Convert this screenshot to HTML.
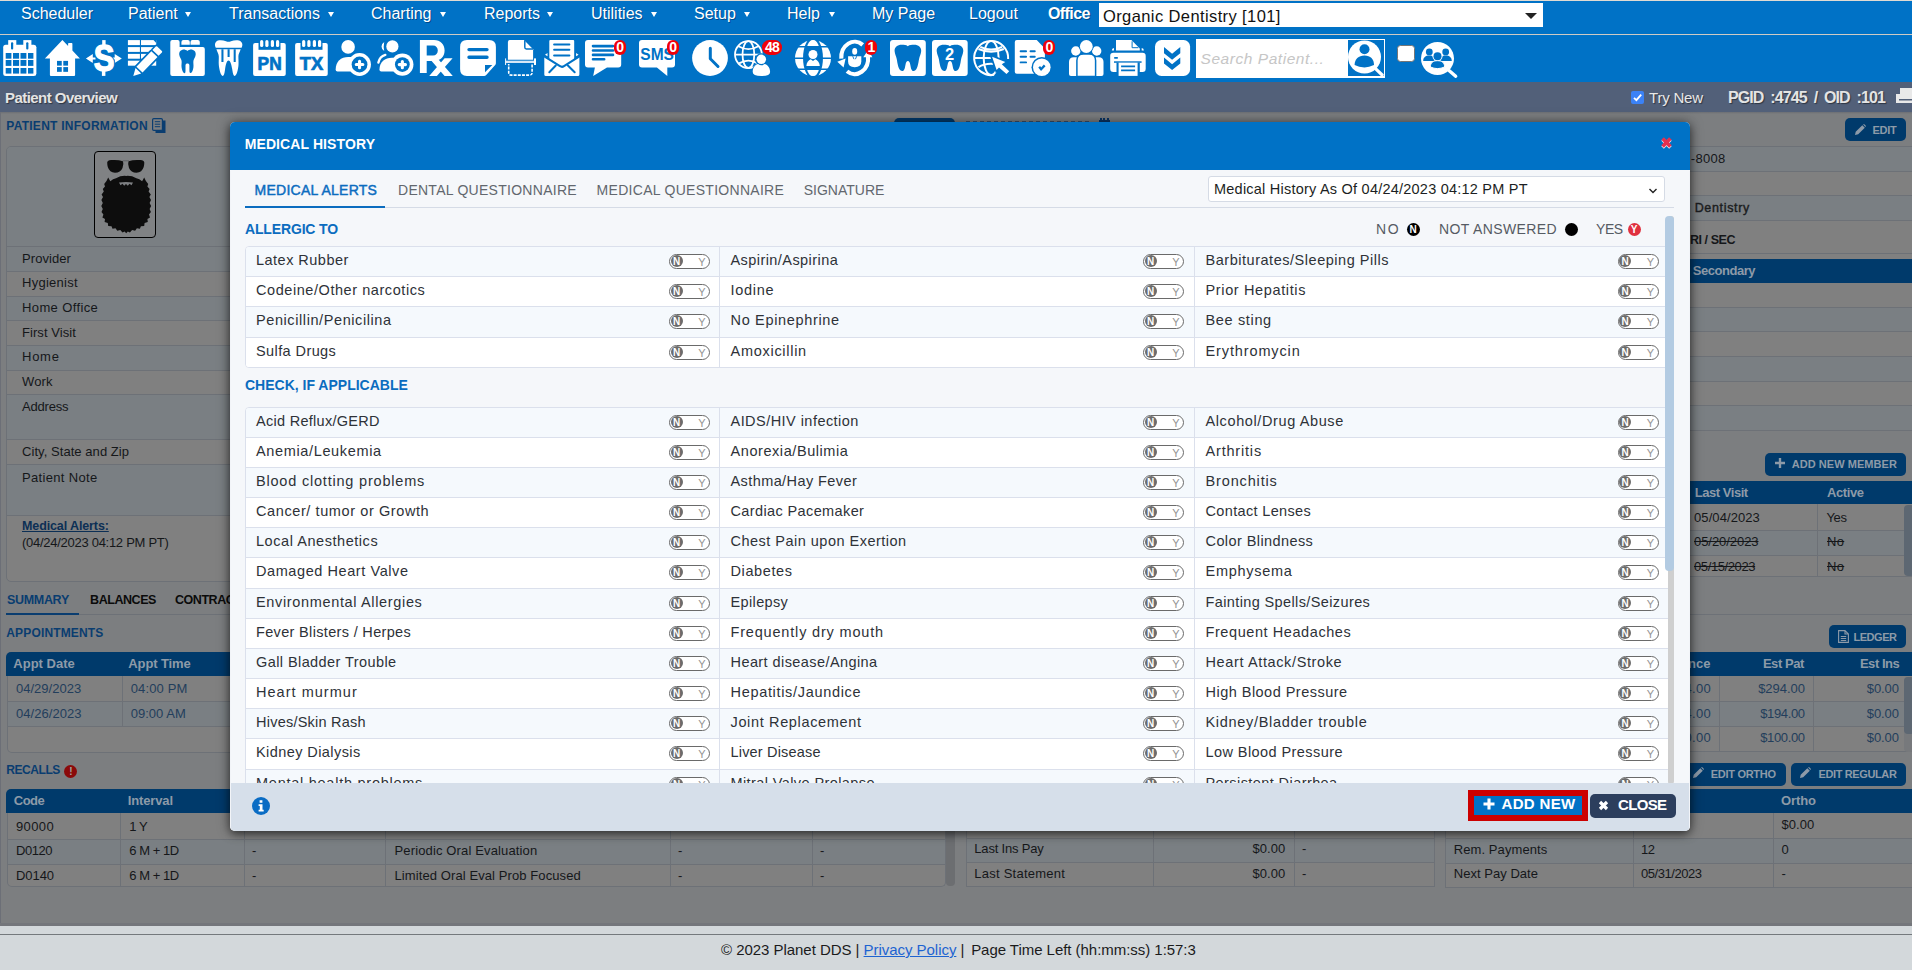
<!DOCTYPE html>
<html>
<head>
<meta charset="utf-8">
<title>Patient Overview</title>
<style>
*{box-sizing:border-box;margin:0;padding:0}
html,body{width:1912px;height:970px;overflow:hidden;background:#7c7e80;font-family:"Liberation Sans",sans-serif;}
#nav{position:absolute;left:0;top:0;width:1912px;height:34px;background:#0072c6;border-top:1px solid #e0dbd3}
#nav span{position:absolute;top:3px;color:#fff;font-size:16px;line-height:20px;white-space:nowrap;text-shadow:1px 1px 0 rgba(0,40,90,.55)}
#nav i{position:absolute;top:11px;width:0;height:0;border-left:3px solid transparent;border-right:3px solid transparent;border-top:5px solid #fff}
#navline{position:absolute;left:0;top:34px;width:1912px;height:1px;background:#cfcbc4}
#tool{position:absolute;left:0;top:35px;width:1912px;height:47px;background:#0072c6}
#tool svg{position:absolute;overflow:visible}
.badge{position:absolute;background:#f00008;color:#fff;font-weight:bold;font-size:14px;line-height:15px;height:14.700px;border-radius:7.300px;text-align:center;letter-spacing:-0.6px}
#title{position:absolute;left:0;top:82px;width:1912px;height:30px;background:#526079}
#title span{position:absolute;color:#e4e4e4;white-space:nowrap;text-shadow:1px 1px 1px rgba(0,0,0,.45)}
#bg{position:absolute;left:0;top:0;width:1912px;height:926px;overflow:hidden;clip-path:inset(112px 0 0 0)}
#bg div,#bg span{position:absolute}
.t{font-size:13px;color:#15171a;white-space:nowrap;letter-spacing:.35px;line-height:16px}
.hd{background:#003a6b}
.ht{font-size:13px;font-weight:bold;color:#8d9aa8;white-space:nowrap;line-height:16px;letter-spacing:0px}
.sec{font-size:12px;font-weight:bold;color:#0a3d70;white-space:nowrap;line-height:16px;letter-spacing:.1px}
.ln{background:#6f7379;height:1px}
.vl{background:#6f7379;width:1px}
.ra{background:#7a7f83}
.rb{background:#808080}
.btn{background:#003a6b;border-radius:5px;color:#8d9aa8;font-weight:bold;font-size:12px;line-height:23px;white-space:nowrap;letter-spacing:-.2px}
#foot{position:absolute;left:0;top:926px;width:1912px;height:44px;background:#d3d8db}
#foot .l{position:absolute;left:0;top:8px;width:1912px;height:1px;background:#74797d}
#foot span{position:absolute;top:15px;font-size:15px;line-height:18px;color:#1b1b1b;white-space:nowrap}
#modal{position:absolute;left:230px;top:122px;width:1460px;height:709px;border-radius:5px;background:#f5f7fa;box-shadow:0 3px 9px rgba(0,0,0,.5),0 0 14px rgba(0,0,0,.35);overflow:hidden}
#mh{position:absolute;left:0;top:0;width:1460px;height:48px;background:#0072c6}
#mh span{position:absolute;left:14.700px;top:14px;color:#fff;font-weight:bold;font-size:14px;line-height:16px;letter-spacing:-.1px}
#mf{position:absolute;left:0;top:661px;width:1460px;height:48px;background:#d6dfea}
#mf div,#mf span{position:absolute}
#mb{position:absolute;left:0;top:48px;width:1460px;height:613px;overflow:hidden}
#mb div,#mb span{position:absolute}
.tab{font-size:14px;line-height:16px;color:#62676e;white-space:nowrap;letter-spacing:.1px}
.lab{font-size:14.5px;line-height:18px;color:#2e3238;white-space:nowrap;letter-spacing:.25px}
.tg{width:41px;height:15px;border:1.5px solid #6a6a6a;border-radius:8px;background:#fff}
.tg b{position:absolute;left:.5px;top:0px;width:12px;height:12px;border-radius:6px;background:#6c6c6c;color:#fff;font-size:10px;line-height:14px;text-align:center;font-weight:bold}
.tg u{position:absolute;right:3.4px;top:1px;font-size:11px;line-height:12px;color:#939393;text-decoration:none}
</style>
</head>
<body>

<div id="nav"><span style="left:21px">Scheduler</span><span style="left:128px">Patient</span><i style="left:185px"></i><span style="left:229px">Transactions</span><i style="left:328px"></i><span style="left:371px">Charting</span><i style="left:440px"></i><span style="left:484px">Reports</span><i style="left:547px"></i><span style="left:591px">Utilities</span><i style="left:651px"></i><span style="left:694px">Setup</span><i style="left:744px"></i><span style="left:787px">Help</span><i style="left:829px"></i><span style="left:872px">My Page</span><span style="left:969px">Logout</span><span style="left:1048px;font-weight:bold;letter-spacing:-.6px">Office</span><div style="position:absolute;left:1099px;top:2px;width:444px;height:24px;background:#fff"><span style="left:4px;top:3px;color:#111;font-size:16.500px;text-shadow:none;letter-spacing:0.393px">Organic Dentistry [101]</span><i style="left:426px;top:10px;border-top:6px solid #222;border-left-width:6px;border-right-width:6px"></i></div></div><div id="navline"></div>
<div id="tool"><svg style="left:2.7px;top:5px" width="34" height="36.2" viewBox="0 0 34 36.2"><rect x=".2" y="4.800" width="33.200" height="31.300" rx="2.500" fill="#fff"/><rect x="5.2" y=".1" width="8.100" height="6" fill="#fff"/><rect x="8" y="2.300" width="2.200" height="7.300" rx="1" fill="#0072c6"/><rect x="20.3" y=".1" width="8.100" height="6" fill="#fff"/><rect x="23.2" y="2.300" width="2.200" height="7.300" rx="1" fill="#0072c6"/><rect x="2.7" y="13" width="5.7" height="5.7" fill="#0072c6"/><rect x="2.7" y="20" width="5.7" height="5.9" fill="#0072c6"/><rect x="2.7" y="28" width="5.7" height="5.6" fill="#0072c6"/><rect x="10" y="13" width="6.1" height="5.7" fill="#0072c6"/><rect x="10" y="20" width="6.1" height="5.9" fill="#0072c6"/><rect x="10" y="28" width="6.1" height="5.6" fill="#0072c6"/><rect x="17.5" y="13" width="5.9" height="5.7" fill="#0072c6"/><rect x="17.5" y="20" width="5.9" height="5.9" fill="#0072c6"/><rect x="17.5" y="28" width="5.9" height="5.6" fill="#0072c6"/><rect x="25" y="13" width="5.4" height="5.7" fill="#0072c6"/><rect x="25" y="20" width="5.4" height="5.9" fill="#0072c6"/><rect x="25" y="28" width="5.4" height="5.6" fill="#0072c6"/></svg><svg style="left:45px;top:5px" width="35" height="36.2" viewBox="0 0 35 36.2"><path d="M17.400,-.1 L23.100,5.900 V3.800 Q23.100,3 23.900,3 H26.600 Q27.400,3 27.400,3.800 V10.500 L34.900,18.400 H30.100 V35.100 Q30.100,36.100 29.100,36.100 H5.900 Q4.900,36.100 4.900,35.100 V18.400 H-.1 Z" fill="#fff"/><rect x="12" y="20.9" width="4.750" height="4.750" fill="#0072c6"/><rect x="12" y="27.1" width="4.750" height="4.750" fill="#0072c6"/><rect x="18.3" y="20.9" width="4.750" height="4.750" fill="#0072c6"/><rect x="18.3" y="27.1" width="4.750" height="4.750" fill="#0072c6"/></svg><svg style="left:86.2px;top:5px" width="36" height="36" viewBox="0 0 36 36"><path d="M-.1,18.500 L6.800,14.100 V17.400 H9.500 V19.500 H6.800 V22.900 Z M35.800,18.500 L28.700,14.100 V17.400 H26 V19.500 H28.700 V22.900 Z" fill="#fff"/><text transform="translate(18.100,0) scale(.84,1)" x="0" y="31.400" font-family="Liberation Sans" font-weight="bold" font-size="37" text-anchor="middle" fill="#0072c6" stroke="#0072c6" stroke-width="3.600">S</text><text transform="translate(18.100,0) scale(.84,1)" x="0" y="31.400" font-family="Liberation Sans" font-weight="bold" font-size="37" text-anchor="middle" fill="#fff" stroke="#fff" stroke-width="1.400">S</text><rect x="16.200" y=".1" width="3.400" height="5" fill="#fff"/><rect x="15.900" y="31" width="3.500" height="4.900" fill="#fff"/></svg><svg style="left:128px;top:5px" width="36" height="36.2" viewBox="0 0 36 36.2"><rect x="-.1" y="0.1" width="12" height="5" fill="#fff"/><rect x="13" y="0.1" width="15.200" height="5" fill="#fff"/><rect x="-.1" y="7.1" width="12" height="4.8" fill="#fff"/><rect x="13" y="7.1" width="15.200" height="4.8" fill="#fff"/><rect x="-.1" y="13.9" width="12" height="4.8" fill="#fff"/><rect x="13" y="13.9" width="15.200" height="4.8" fill="#fff"/><rect x="-.1" y="20.7" width="12" height="5" fill="#fff"/><rect x="13" y="20.7" width="15.200" height="5" fill="#fff"/><path d="M28.200,.1 V3 L25.500,.1 Z" fill="#0072c6" transform="translate(0,0) scale(1,1)"/><g transform="translate(5.300,36.100) rotate(-46.200)"><path d="M0,0 L7.300,-3.900 V3.900 Z M8.900,-4.250 H30.500 V4.250 H8.900 Z M32.100,-4.250 H36.900 Q37.900,-4.250 37.900,-3.250 V3.250 Q37.900,4.250 36.900,4.250 H32.100 Z" fill="#0072c6" stroke="#0072c6" stroke-width="3.2" stroke-linejoin="round"/><path d="M0,0 L7.300,-3.900 V3.900 Z M8.900,-4.250 H30.500 V4.250 H8.900 Z M32.100,-4.250 H36.900 Q37.900,-4.250 37.900,-3.250 V3.250 Q37.900,4.250 36.900,4.250 H32.100 Z" fill="#fff" stroke="#fff" stroke-width="0" stroke-linejoin="round"/></g></svg><svg style="left:170.2px;top:5px" width="35" height="36.2" viewBox="0 0 35 36.2"><path d="M11.400,4.800 V2.100 Q11.400,.1 13.400,.1 H17.800 Q19.800,.1 19.800,2.100 V4.800 Z M20.500,4.800 V2.100 Q20.500,.1 22.500,.1 H27.800 Q29.800,.1 29.800,2.100 V4.800 Z" fill="#fff"/><path d="M.3,2.100 Q.3,.1 2.300,.1 H7.600 Q9.600,.1 9.600,2.100 V7.100 H32.800 Q34.800,7.100 34.800,9.100 V34.100 Q34.800,36.100 32.800,36.100 H2.300 Q.3,36.100 .3,34.100 Z" fill="#fff"/><path d="M17.400,10.900 C16.200,10 14.200,9.300 12.500,9.700 C10,10.300 9,12.500 9.200,14.500 C9.500,17 11,18.500 11.500,20.500 C12,22.500 11.200,25 11.600,27.500 C12,30.500 13,32.800 14.300,33.200 C15.300,33.400 15.500,32 15.500,30.500 L15.500,25.500 C15.500,24 16.500,23.600 17.400,23.600 C18.400,23.600 19.400,24 19.400,25.500 L19.400,30.500 C19.400,32 19.700,33.300 20.700,33 C22,32.600 23,30.500 23.400,27.500 C23.800,25 23,22.500 23.500,20.500 C24,18.500 25.500,17 25.700,14.500 C25.900,12.500 24.900,10.300 22.400,9.700 C20.700,9.300 18.600,10 17.400,10.900 Z" fill="#0072c6"/></svg><svg style="left:215.4px;top:5px" width="27.6" height="36" viewBox="0 0 27.6 36"><path d="M.8,7.800 C-.5,5.500 -.5,2 3,.6 C5.500,-.3 8.500,.3 11,1.300 C12.800,2 14.200,2 16,1.300 C18.500,.3 21.500,-.3 24,.6 C27.900,2 27.900,5.500 26.600,7.800 Z" fill="#fff"/><path d="M1.400,9.150 H25.700 C24.500,12.500 23.400,14 23.400,16.500 C23.400,19 23.700,22 23.500,25 C23.200,29.500 21.500,35.900 19.800,35.900 C18.100,35.900 17.700,32 17.200,29 C16.600,25.500 15.500,20.500 13.500,20.500 C11.600,20.500 10.600,25.500 10.100,29 C9.700,32 9.300,35.900 7.600,35.900 C5.900,35.900 4.200,29.500 3.800,25 C3.600,22 3.900,19 3.800,16.500 C3.700,14 2.600,12.500 1.400,9.150 Z" fill="#fff"/><path d="M7.450,9.150V21.900M19.700,9.150V21.900M13.600,9.150V17.100" stroke="#0072c6" stroke-width="2.050"/></svg><svg style="left:253.3px;top:5px" width="33" height="36.2" viewBox="0 0 33 36.2"><path d="M2.100,3 H30.750 Q32.750,3 32.750,5 V34.100 Q32.750,36.100 30.750,36.100 H2.100 Q.1,36.100 .1,34.100 V5 Q.1,3 2.100,3 Z" fill="#fff"/><rect x="5.500" y="0" width="22" height="9.800" fill="#0072c6"/><rect x="7.1" y=".1" width="3.200" height="7" rx="1.600" fill="#fff"/><rect x="12.3" y=".1" width="3.200" height="7" rx="1.600" fill="#fff"/><rect x="17.8" y=".1" width="3.200" height="7" rx="1.600" fill="#fff"/><rect x="23" y=".1" width="3.200" height="7" rx="1.600" fill="#fff"/><text x="4.6" y="29.800" font-family="Liberation Sans" font-weight="bold" font-size="18.400" textLength="24.1" lengthAdjust="spacingAndGlyphs" fill="#0072c6" stroke="#0072c6" stroke-width=".7">PN</text></svg><svg style="left:295.3px;top:5px" width="33" height="36.2" viewBox="0 0 33 36.2"><path d="M2.100,3 H30.750 Q32.750,3 32.750,5 V34.100 Q32.750,36.100 30.750,36.100 H2.100 Q.1,36.100 .1,34.100 V5 Q.1,3 2.100,3 Z" fill="#fff"/><rect x="5.500" y="0" width="22" height="9.800" fill="#0072c6"/><rect x="7.1" y=".1" width="3.200" height="7" rx="1.600" fill="#fff"/><rect x="12.3" y=".1" width="3.200" height="7" rx="1.600" fill="#fff"/><rect x="17.8" y=".1" width="3.200" height="7" rx="1.600" fill="#fff"/><rect x="23" y=".1" width="3.200" height="7" rx="1.600" fill="#fff"/><text x="4.8" y="29.800" font-family="Liberation Sans" font-weight="bold" font-size="18.400" textLength="23.5" lengthAdjust="spacingAndGlyphs" fill="#0072c6" stroke="#0072c6" stroke-width=".7">TX</text></svg><svg style="left:336.2px;top:5px" width="36" height="37" viewBox="0 0 36 37"><circle cx="12.100" cy="6.900" r="6.800" fill="#fff"/><path d="M-.35,29.800 C-.35,21.500 5,17.100 12.300,17.100 H20 V31.600 H1.450 Q-.35,31.600 -.35,29.800 Z" fill="#fff"/><circle cx="23.55" cy="24.5" r="11.4" fill="#fff"/><circle cx="23.55" cy="24.5" r="7.9" fill="#0072c6"/><path d="M20.25,24.5h6.6M23.55,21.2v6.6" stroke="#fff" stroke-width="3.100" stroke-linecap="round"/></svg><svg style="left:376.9px;top:5px" width="37" height="37" viewBox="0 0 37 37"><path d="M7.200,1.900 A5.200,5.200 0 0 0 7.200,11 A22,22 0 0 1 7.200,1.900 Z" fill="#fff"/><path d="M1.400,22.600 C2.300,18.500 5,15.800 8.300,14.900" fill="none" stroke="#fff" stroke-width="2.400" stroke-linecap="round"/><circle cx="15.400" cy="6.400" r="6.100" fill="#fff"/><path d="M2.450,29.800 C2.450,22 8,17.800 15,17.800 H22 V31.600 H4.250 Q2.450,31.600 2.450,29.800 Z" fill="#fff"/><circle cx="25.35" cy="24.6" r="11.1" fill="#fff"/><circle cx="25.35" cy="24.6" r="7.4" fill="#0072c6"/><path d="M22.25,24.6h6.2M25.35,21.5v6.2" stroke="#fff" stroke-width="3.100" stroke-linecap="round"/></svg><svg style="left:420.4px;top:5px" width="34" height="36.2" viewBox="0 0 34 36.2"><path d="M-.1,.1 H14 C20.500,.1 24.600,4.400 24.600,10.500 C24.600,16.500 20.500,20.900 14,20.900 H6.700 V33 H-.1 Z M6.700,5.500 V15.500 H13 C16,15.500 17.800,13.500 17.800,10.500 C17.800,7.500 16,5.500 13,5.500 Z" fill="#fff" fill-rule="evenodd"/><path d="M11.200,20.500 L18.300,19.200 L32.800,36.100 H24.600 Z M24.600,18.200 H32.600 L16.900,36.100 H9.200 Z" fill="#fff"/></svg><svg style="left:460px;top:5px" width="36" height="36.2" viewBox="0 0 36 36.2"><path d="M6.900,.1 H29.100 Q35.900,.1 35.900,6.900 V23.300 Q35.900,24.300 35.200,25 L26,35.300 Q25.200,36.100 24.200,36.100 H6.900 Q.1,36.100 .1,29.300 V6.900 Q.1,.1 6.900,.1 Z" fill="#fff"/><path d="M25,25 H32.300 L25,32.300 Z" fill="#0072c6"/><path d="M9,9.600H27M9,17.300H27" stroke="#0072c6" stroke-width="3.400" stroke-linecap="round"/></svg><svg style="left:505px;top:5px" width="31" height="36.2" viewBox="0 0 31 36.2"><path d="M4.900,.1 H19 L28.100,9.150 V19.800 H2.900 V2.100 Q2.900,.1 4.900,.1 Z" fill="#fff"/><path d="M19.800,.3 V7.300 Q19.800,8.900 21.400,8.900 H28.100" fill="none" stroke="#0072c6" stroke-width="1.500"/><rect x=".7" y="20.700" width="29.200" height="2.300" fill="#d7e7f6"/><rect x="0" y="18.400" width="1.100" height="6.600" fill="#e6f0fa"/><rect x="29" y="18.400" width="2" height="6.600" fill="#fff"/><path d="M3.700,23.900 V32.600 Q3.700,35.100 6.200,35.100 H24.600 Q27.100,35.100 27.100,32.600 V23.900" fill="none" stroke="#fff" stroke-width="1.600" stroke-dasharray="3 1.150" stroke-dashoffset="1.500"/></svg><svg style="left:543.8px;top:5px" width="35.7" height="36.2" viewBox="0 0 35.7 36.2"><path d="M1,14.800 L3.500,13 V16.200 Z M34.600,14.800 L32.100,13 V16.200 Z" fill="#fff"/><path d="M6.300,.1 H29.200 Q30.200,.1 30.200,1.100 V28 H5.300 V1.100 Q5.300,.1 6.300,.1 Z" fill="#fff"/><path d="M10.100,4.400H25.400M10.100,9.800H25.400M10.100,15.500H25.400" stroke="#0072c6" stroke-width="2" stroke-linecap="round"/><path d="M.3,17.300 L.3,16 L16,26.300 Q18,27.600 20,26.300 L35.400,16 V34.600 Q35.400,36.100 33.900,36.100 H1.800 Q.3,36.100 .3,34.600 Z" fill="#fff"/><path d="M-.5,15.800 L16,26.200 Q18,27.500 20,26.200 L36.200,15.800" fill="none" stroke="#0072c6" stroke-width="2.100"/><path d="M-1,15 L.3,17.500 V14 Z M36.700,15 L35.400,17.500 V14 Z" fill="#0072c6"/><path d="M11.800,25.500 L5.300,32.300 M23.900,25.500 L30.700,32.300" stroke="#0072c6" stroke-width="2" stroke-linecap="round"/></svg><svg style="left:585px;top:5px" width="36.2" height="36" viewBox="0 0 36.2 36"><path d="M3,0 H33.200 Q36.200,0 36.200,3 V24.500 Q36.200,27.500 33.200,27.500 H22 L8.200,35.900 L9.900,27.500 H3 Q0,27.500 0,24.500 V3 Q0,0 3,0 Z" fill="#fff"/><path d="M8,6.100H28M8,10.500H28M8,14.900H28M8,19.300H19.200" stroke="#0072c6" stroke-width="2.600" stroke-linecap="round"/></svg><div class="badge" style="left:614px;top:5.100px;width:11.6px">0</div><svg style="left:639px;top:5px" width="36" height="36" viewBox="0 0 36 36"><path d="M3,0 H33 Q36,0 36,3 V24.500 Q36,27.500 33,27.500 H28.300 V35.900 L17.900,27.500 H3 Q0,27.500 0,24.500 V3 Q0,0 3,0 Z" fill="#fff"/><text x="1.300" y="20.300" font-family="Liberation Sans" font-weight="bold" font-size="15.800" textLength="33.600" lengthAdjust="spacingAndGlyphs" fill="#0072c6">SMS</text></svg><div class="badge" style="left:667px;top:5.100px;width:11.9px">0</div><svg style="left:691.8px;top:4.9px" width="36" height="36" viewBox="0 0 36 36"><circle cx="18" cy="18" r="17.900" fill="#fff"/><path d="M18.300,8.300 V18.800 L26,26.500" fill="none" stroke="#0072c6" stroke-width="3" stroke-linecap="round" stroke-linejoin="round"/></svg><svg style="left:734px;top:5px" width="37" height="37" viewBox="0 0 37 37"><g fill="none" stroke="#fff" stroke-width="1.800"><circle cx="14.400" cy="14.600" r="13.400"/><ellipse cx="14.400" cy="14.600" rx="5.900" ry="13.400"/><path d="M1,14.600H27.800M4.300,6.300 Q14.400,12 24.500,6.300M5,23.400 Q14.400,18 23.800,23.400"/></g><circle cx="27.300" cy="19.350" r="6.200" fill="#0072c6"/><circle cx="27.300" cy="19.350" r="4.750" fill="#fff"/><path d="M18.700,32 C18.700,27 21.500,24.700 24,24 Q27.300,26.600 30.600,24 C33.100,24.700 36.100,27 36.100,32 Q36.100,36.100 27.400,36.100 Q18.700,36.100 18.700,32 Z" fill="#fff" stroke="#0072c6" stroke-width="1.500" paint-order="stroke"/></svg><div class="badge" style="left:762.3px;top:5.100px;width:19.6px">48</div><svg style="left:795px;top:4.9px" width="36" height="36.2" viewBox="0 0 36 36.2"><circle cx="18" cy="18.100" r="18" fill="#fff"/><clipPath id="gp"><rect x="0" y="6.800" width="36" height="22.500"/></clipPath><ellipse cx="18" cy="18.100" rx="8.900" ry="19.500" fill="#0072c6" clip-path="url(#gp)"/><g fill="none" stroke="#0072c6"><path d="M0,6.800H36M0,18.200H36M0,29.300H36" stroke-width="1.400"/><ellipse cx="18" cy="18.100" rx="8.900" ry="19.500" stroke-width="2.100"/></g><circle cx="18" cy="14.500" r="4.500" fill="#fff"/><path d="M11.400,26 C11.400,22.500 13.500,20.500 15.700,19.200 L18,21.100 L20.300,19.200 C22.500,20.500 24.800,22.500 24.800,26 Z" fill="#fff"/></svg><svg style="left:836.8px;top:4.9px" width="37" height="37" viewBox="0 0 37 37"><path d="M25.700,4.900 A13.400,16 0 0 0 4.300,18.700" fill="none" stroke="#fff" stroke-width="4.100"/><path d="M.3,21.800 L8.600,18.600 L6.600,27.400 Z" fill="#fff"/><path d="M10,31.200 A13.400,16 0 0 0 30.970,15.900" fill="none" stroke="#fff" stroke-width="4.100"/><path d="M26.300,17.200 L35.300,17.200 L31.500,9.500 Z" fill="#fff"/><ellipse cx="17.700" cy="11.400" rx="2.500" ry="3.300" fill="#fff"/><path d="M11.100,16.200 H24.300 V21.500 Q24.300,27.200 17.700,27.200 Q11.100,27.200 11.100,21.500 Z" fill="#fff"/><path d="M15.700,16.200 L17,19.200 M19.700,16.200 L18.400,19.200" stroke="#0072c6" stroke-width=".9" fill="none"/></svg><div class="badge" style="left:865.3px;top:5.100px;width:11.8px">1</div><svg style="left:890.1px;top:5px" width="35.8" height="36" viewBox="0 0 35.8 36"><rect x="0" y="0" width="35.800" height="36" rx="3" fill="#fff"/><path d="M 17.77,6.13 C 16.04,4.70 14.18,4.70 11.78,4.70 C 7.26,4.70 4.33,7.34 4.60,11.04 C 4.87,14.20 6.20,16.32 6.73,18.96 C 7.53,22.65 8.06,30.57 12.05,31.10 C 14.44,31.36 14.97,27.40 15.51,24.76 C 16.04,22.12 16.57,20.94 17.90,20.94 C 19.23,20.94 19.76,22.12 20.29,24.76 C 20.83,27.40 21.36,31.36 23.75,31.10 C 27.74,30.57 28.27,22.65 29.07,18.96 C 29.60,16.32 30.93,14.20 31.20,11.04 C 31.47,7.34 28.54,4.70 24.02,4.70 C 21.62,4.70 19.76,4.70 17.77,6.13 Z" fill="#0072c6"/></svg><svg style="left:932.2px;top:5px" width="35.7" height="36" viewBox="0 0 35.7 36"><rect x="0" y="0" width="35.700" height="36" rx="3" fill="#fff"/><path d="M 17.87,6.13 C 16.14,4.70 14.28,4.70 11.88,4.70 C 7.36,4.70 4.43,7.34 4.70,11.04 C 4.97,14.20 6.30,16.32 6.83,18.96 C 7.63,22.65 8.16,30.57 12.15,31.10 C 14.54,31.36 15.07,27.40 15.61,24.76 C 16.14,22.12 16.67,20.94 18.00,20.94 C 19.33,20.94 19.86,22.12 20.39,24.76 C 20.93,27.40 21.46,31.36 23.85,31.10 C 27.84,30.57 28.37,22.65 29.17,18.96 C 29.70,16.32 31.03,14.20 31.30,11.04 C 31.57,7.34 28.64,4.70 24.12,4.70 C 21.72,4.70 19.86,4.70 17.87,6.13 Z" fill="#0072c6"/><text x="17.700" y="19.600" font-family="Liberation Sans" font-weight="bold" font-size="16.500" text-anchor="middle" fill="#fff">2</text></svg><svg style="left:972.8px;top:4.9px" width="37" height="37" viewBox="0 0 37 37"><g fill="none" stroke="#fff" stroke-width="2"><path d="M21.10,34.84 A17,17 0 1 1 35.13,18.99"/><ellipse cx="18.150" cy="18.100" rx="7.500" ry="17"/><path d="M1.200,18.100H20M5.500,9 Q18.150,14.500 30.800,9M7.300,6.800 Q18.150,12.300 29,6.800M5.500,27.200 Q12,22.800 22,24"/></g><path d="M19.100,16.800 L32.300,21.900 L28.800,24.300 L36.200,31.300 L33.500,33.900 L26,27.600 L23.600,30.100 Z" fill="#0072c6" stroke="#0072c6" stroke-width="3.400" stroke-linejoin="miter"/><path d="M19.100,16.800 L32.300,21.900 L28.800,24.300 L36.200,31.300 L33.500,33.900 L26,27.600 L23.600,30.100 Z" fill="#fff"/></svg><svg style="left:1015.2px;top:5px" width="37.5" height="37.8" viewBox="0 0 37.5 37.8"><path d="M1.800,0 H21.700 L29.900,8.500 V31.700 Q29.900,33.700 27.900,33.700 H1.800 Q-.2,33.700 -.2,31.700 V2 Q-.2,0 1.800,0 Z" fill="#fff"/><path d="M5.600,11.300H11.100M15.500,11.300H19.800M5.600,16.700H11.100M15.500,16.700H19.800M5.600,22.400H11.100" stroke="#0072c6" stroke-width="1.900" stroke-linecap="round"/><circle cx="26.800" cy="27.300" r="10.300" fill="#0072c6"/><circle cx="26.800" cy="27.300" r="8.800" fill="#fff"/><path d="M24.200,26.800 L26.100,29.200 L29.700,25.400" fill="none" stroke="#0072c6" stroke-width="2.300"/></svg><div class="badge" style="left:1043.2px;top:5.100px;width:11.7px">0</div><svg style="left:1069.1px;top:5px" width="34.5" height="36" viewBox="0 0 34.5 36"><circle cx="6.800" cy="11" r="4.700" fill="#fff"/><circle cx="27.700" cy="11" r="4.700" fill="#fff"/><path d="M0,34 V22 Q0,17.200 4.800,17.200 H29.700 Q34.500,17.200 34.500,22 V34 Q34.500,36 32.500,36 H2 Q0,36 0,34 Z" fill="#fff"/><path d="M7.900,36.600 V20.400 Q7.900,13.900 14.400,13.900 H20.100 Q26.600,13.900 26.600,20.400 V36.600 Z" fill="#fff" stroke="#0072c6" stroke-width="1.500"/><circle cx="17.300" cy="6.500" r="7.300" fill="#0072c6"/><circle cx="17.300" cy="6.500" r="6.400" fill="#fff"/></svg><svg style="left:1110px;top:5px" width="35.9" height="36" viewBox="0 0 35.9 36"><path d="M6,0 H21.400 L29.800,8.400 V10.600 H6 Z" fill="#fff"/><path d="M22.100,1.300V7.700H28.400" fill="none" stroke="#0072c6" stroke-width="1"/><path d="M1.800,10.600 Q1.800,8.200 4,8 V10.600 Z M33.900,10.600 Q33.900,8.200 31.700,8 V10.600 Z" fill="#fff"/><rect x=".2" y="12.800" width="35.500" height="19.100" rx="3.200" fill="#fff"/><rect x="4" y="17.100" width="4" height="1.600" rx=".8" fill="#0072c6"/><rect x="4" y="21.300" width="27.600" height="1.500" fill="#0072c6"/><rect x="6.500" y="22.700" width="23.300" height="9.300" fill="#0072c6"/><rect x="8.600" y="22.700" width="19" height="13.200" fill="#fff"/><path d="M11.100,26.400H25.100M11.100,30.400H25.100" stroke="#0072c6" stroke-width="1.800"/></svg><svg style="left:1154.9px;top:5px" width="35.1" height="36" viewBox="0 0 35.1 36"><rect x="0" y="0" width="35.100" height="36" rx="6.500" fill="#fff"/><path d="M9,7.100 L17.100,13.700 L25.300,7.100 V13.200 L17.100,19.800 L9,13.200 Z M9,17.600 L17.100,24.200 L25.300,17.600 V23.600 L17.100,30 L9,23.600 Z" fill="#0072c6"/></svg><div style="position:absolute;left:1196px;top:4px;width:189px;height:39px;background:#fff"></div><span style="position:absolute;left:1200.500px;top:13.500px;font-size:15.500px;line-height:20px;font-style:italic;color:#c6c6c6;white-space:nowrap;letter-spacing:.55px">Search Patient...</span><div style="position:absolute;left:1348px;top:5px;width:36px;height:36px;background:#0072c6"></div><svg style="left:1348.1px;top:5px" width="36" height="36" viewBox="0 0 36 36"><circle cx="16.500" cy="17" r="16.500" fill="#fff"/><path d="M28,29.100 L34.200,35" stroke="#fff" stroke-width="3.200" stroke-linecap="round"/><circle cx="16.500" cy="9.300" r="5" fill="#0072c6"/><path d="M6.600,25 C6.600,19 10.500,15.400 16.500,15.400 C22.500,15.400 26,19 26,25 Q21,27.400 16.500,27.400 Q11,27.400 6.600,25 Z" fill="#0072c6"/></svg><div style="position:absolute;left:1397px;top:9.600px;width:17.500px;height:17.500px;background:#fff;border:1.500px solid #767676;border-radius:3.500px"></div><svg style="left:1421.1px;top:7.2px" width="36" height="36" viewBox="0 0 36 36"><circle cx="16.500" cy="16.500" r="16.500" fill="#fff"/><path d="M28.300,28.800 L34.700,34.200" stroke="#fff" stroke-width="3.400" stroke-linecap="round"/><circle cx="8.300" cy="9.900" r="3.400" fill="#0072c6"/><circle cx="24.700" cy="9.900" r="3.400" fill="#0072c6"/><path d="M2.200,19 C2.200,15.500 4.500,13.600 8.300,13.600 C12,13.600 13.500,15.500 13.500,19 Z M19.500,19 C19.500,15.500 21,13.600 24.700,13.600 C28.500,13.600 30.800,15.500 30.800,19 Z" fill="#0072c6"/><circle cx="16.500" cy="14.300" r="5" fill="#fff"/><circle cx="16.500" cy="14.300" r="4" fill="#0072c6"/><path d="M9.400,25 C9.400,20.500 12,18.700 16.500,18.700 C21,18.700 23.600,20.500 23.600,25 Q20,26.600 16.500,26.600 Q13,26.600 9.400,25 Z" fill="#0072c6" stroke="#fff" stroke-width="1"/></svg></div>
<div id="title"><span style="left:5px;top:7px;font-size:15px;font-weight:bold;line-height:18px;letter-spacing:-.55px">Patient Overview</span><div style="position:absolute;left:1631px;top:9px;width:13px;height:13px;background:#3b82f6;border-radius:2px"><svg width="13" height="13" viewBox="0 0 13 13" style="position:absolute;left:0;top:0"><path d="M3 6.8 L5.4 9.2 L10.2 3.6" fill="none" stroke="#fff" stroke-width="1.8"/></svg></div><span style="left:1649px;top:7px;font-size:15px;line-height:18px;letter-spacing:-.2px;color:#e8e8e8">Try New</span><span style="left:1728px;top:6px;font-size:16px;font-weight:bold;line-height:20px;letter-spacing:-.9px;word-spacing:3.300px">PGID :4745 / OID :101</span><svg style="position:absolute;left:1896px;top:4.500px" width="16" height="20" viewBox="0 0 16 18"><path d="M4 0h12v7H4z M0 6h16v9H0z" fill="#e9e9e9"/><path d="M3 11h13v1.5H3z" fill="#526079"/></svg></div>
<div id="bg"><div style="left:0px;top:112px;width:1912px;height:814px;background:#7c7e80;"></div><div style="left:0px;top:112px;width:1912px;height:2px;background:linear-gradient(rgba(60,65,80,.25),rgba(60,65,80,0));"></div><div style="left:0px;top:112px;width:1.3px;height:814px;background:#6c6f77;"></div><div style="left:0px;top:922.5px;width:1912px;height:3.5px;background:#74767b;"></div><span class="sec" style="left:6.3px;top:118px;font-size:12px;letter-spacing:0.256px">PATIENT INFORMATION</span><svg style="position:absolute;left:152px;top:118px" width="14" height="15" viewBox="0 0 14 15"><path d="M3.5 2.500h10v12.500h-10z" fill="#0a3d70"/><rect x=".6" y=".6" width="9.800" height="11.800" rx="1.200" fill="#7c7e80" stroke="#0a3d70" stroke-width="1.200"/><path d="M2.800 3.700h5.400M2.800 6.200h5.400M2.800 8.700h5.400" stroke="#0a3d70" stroke-width="1"/></svg><div style="left:5.5px;top:146px;width:941px;height:435.5px;background:#808080;border:1px solid #6d7177;border-radius:5px;overflow:hidden;"></div><div style="left:6.5px;top:146.5px;width:930px;height:99.5px;background:#7a7f83;border-radius:4px 0 0 0;"></div><div style="left:6.5px;top:246.8px;width:930px;height:24.2px;background:#7a7f83;"></div><div style="left:6.5px;top:246.2px;width:930px;height:1px;background:#6d7177;"></div><span class="t" style="left:22px;top:251px;;letter-spacing:0.075px">Provider</span><div style="left:6.5px;top:271.5px;width:930px;height:24.5px;background:#808080;"></div><div style="left:6.5px;top:270.9px;width:930px;height:1px;background:#6d7177;"></div><span class="t" style="left:22px;top:275px;;letter-spacing:0.268px">Hygienist</span><div style="left:6.5px;top:296.2px;width:930px;height:24.3px;background:#7a7f83;"></div><div style="left:6.5px;top:295.6px;width:930px;height:1px;background:#6d7177;"></div><span class="t" style="left:22px;top:300px;;letter-spacing:0.382px">Home Office</span><div style="left:6.5px;top:320.8px;width:930px;height:24.2px;background:#808080;"></div><div style="left:6.5px;top:320.2px;width:930px;height:1px;background:#6d7177;"></div><span class="t" style="left:22px;top:325px;;letter-spacing:0.071px">First Visit</span><div style="left:6.5px;top:345.5px;width:930px;height:24.5px;background:#7a7f83;"></div><div style="left:6.5px;top:344.9px;width:930px;height:1px;background:#6d7177;"></div><span class="t" style="left:22px;top:349px;;letter-spacing:0.751px">Home</span><div style="left:6.5px;top:370.5px;width:930px;height:24px;background:#808080;"></div><div style="left:6.5px;top:369.9px;width:930px;height:1px;background:#6d7177;"></div><span class="t" style="left:22px;top:374px;;letter-spacing:0.135px">Work</span><div style="left:6.5px;top:394.8px;width:930px;height:44.2px;background:#7a7f83;"></div><div style="left:6.5px;top:394.2px;width:930px;height:1px;background:#6d7177;"></div><span class="t" style="left:22px;top:399px;;letter-spacing:-0.198px">Address</span><div style="left:6.5px;top:439.5px;width:930px;height:24.5px;background:#808080;"></div><div style="left:6.5px;top:438.9px;width:930px;height:1px;background:#6d7177;"></div><span class="t" style="left:22px;top:444px;;letter-spacing:0.059px">City, State and Zip</span><div style="left:6.5px;top:464.5px;width:930px;height:51px;background:#7a7f83;"></div><div style="left:6.5px;top:463.9px;width:930px;height:1px;background:#6d7177;"></div><span class="t" style="left:22px;top:470px;;letter-spacing:0.335px">Patient Note</span><div style="left:6.5px;top:515.4px;width:930px;height:1px;background:#6d7177;"></div><div style="left:94px;top:151px;width:62px;height:87px;background:#808284;border:1px solid #000;border-radius:4px;"></div><svg style="position:absolute;left:101px;top:158px" width="51" height="77" viewBox="0 0 51 77"><path d="M6.200,4.500 Q6.500,2.300 10,2.100 Q17,1.500 22,3.200 Q23,6 21.500,10 Q19.500,14.800 14,14.800 Q8.500,14.500 6.800,9 Q6.200,6.500 6.200,4.500 Z" fill="#0d0d0d"/><path d="M43.300,4.500 Q43,2.300 39.500,2.100 Q32.500,1.500 27.500,3.200 Q26.500,6 28,10 Q30,14.800 35.500,14.800 Q41,14.500 42.700,9 Q43.300,6.500 43.300,4.500 Z" fill="#0d0d0d"/><path d="M21.500,2.800 H28" stroke="#55585c" stroke-width=".8"/><path d="M7.2,19.500 L9.300,23.300 Q12,20.600 15,20.300 Q20,17.400 25.200,17.900 Q30.400,17.400 35.400,20.300 Q38.400,20.600 41.100,23.300 L43.200,19.500 L44.9,23 L47.2,26 L46.4,28.5 L48.6,31 L47.6,33.5 L49.8,36.5 L48.4,39 L50,42 L48.6,45 L50.1,48 L48.6,51 L49.9,54 L48,56.5 L49,59.5 L46.4,61 L46.8,64 L43.6,65 L43.2,68 L39.9,68.2 L38.9,70.8 L35.9,70.3 L34.1,72.8 L31.1,72 L28.9,74.4 L26.8,73.4 L25.2,75.2 L23.6,73.4 L21.5,74.4 L19.3,72 L16.3,72.8 L14.5,70.3 L11.5,70.8 L10.5,68.2 L7.2,68 L6.8,65 L3.6,64 L4,61 L1.4,59.5 L2.4,56.5 L0.5,54 L1.8,51 L0.3,48 L1.8,45 L0.4,42 L2,39 L0.6,36.5 L2.8,33.5 L1.8,31 L4,28.5 L3.2,26 L5.5,23 Z" fill="#0d0d0d"/><path d="M18,24.600 Q25,23.400 32,24.600 L30.500,27.300 L28.500,25.800 L26.800,27.800 L25,26 L23.200,27.800 L21.500,25.800 L19.500,27.300 Z" fill="#7d7f82"/></svg><span class="t" style="left:22px;top:518px;font-weight:bold;color:#0c2f55;text-decoration:underline;font-size:12.5px;letter-spacing:-0.111px">Medical Alerts:</span><span class="t" style="left:22px;top:535px;;letter-spacing:-0.277px">(04/24/2023 04:12 PM PT)</span><span class="t" style="left:6.9px;top:592px;color:#0a3d70;font-weight:bold;font-size:12.5px;letter-spacing:-0.297px">SUMMARY</span><span class="t" style="left:90.1px;top:592px;color:#0b0b0b;font-weight:bold;font-size:12.5px;letter-spacing:-0.45px">BALANCES</span><span class="t" style="left:175px;top:592px;color:#0b0b0b;font-weight:bold;font-size:12.5px;letter-spacing:-0.45px">CONTRACTS</span><div style="left:6px;top:614px;width:1906px;height:1px;background:#6d7177;"></div><div style="left:6px;top:613.3px;width:73px;height:1.7px;background:#0a3d70;"></div><span class="sec" style="left:6.3px;top:625px;;letter-spacing:0.151px">APPOINTMENTS</span><div style="left:6px;top:652px;width:940px;height:24px;background:#003a6b;border-radius:5px 5px 0 0;"></div><span class="ht" style="left:13.3px;top:655.5px;;letter-spacing:0.005px">Appt Date</span><span class="ht" style="left:128.3px;top:655.5px;;letter-spacing:-0.123px">Appt Time</span><div style="left:7px;top:676px;width:939px;height:76.5px;background:#808080;border:1px solid #6d7177;border-top:none;border-radius:0 0 5px 5px;"></div><div style="left:8px;top:676px;width:937px;height:25px;background:#808080;"></div><div style="left:8px;top:701.5px;width:937px;height:25px;background:#7a7f83;"></div><div style="left:8px;top:701px;width:937px;height:1px;background:#6d7177;"></div><div style="left:8px;top:726px;width:937px;height:1px;background:#6d7177;"></div><div style="left:122px;top:676px;width:1px;height:50px;background:#6d7177;"></div><span class="t" style="left:16px;top:680.5px;color:#233e5c;letter-spacing:0.007px">04/29/2023</span><span class="t" style="left:130.7px;top:680.5px;color:#233e5c;letter-spacing:0.141px">04:00 PM</span><span class="t" style="left:16px;top:705.5px;color:#233e5c;letter-spacing:0.041px">04/26/2023</span><span class="t" style="left:130.7px;top:705.5px;color:#233e5c;letter-spacing:0.027px">09:00 AM</span><span class="sec" style="left:6.3px;top:762px;;letter-spacing:-0.45px">RECALLS</span><div style="left:64.300px;top:764.500px;width:13px;height:13px;border-radius:7px;background:#8b0a0a;color:#a3a3a3;font-size:10px;font-weight:bold;line-height:13px;text-align:center">!</div><div style="left:6px;top:789px;width:949px;height:24px;background:#003a6b;border-radius:5px 5px 0 0;"></div><span class="ht" style="left:13.7px;top:793px;;letter-spacing:-0.45px">Code</span><span class="ht" style="left:127.7px;top:793px;;letter-spacing:-0.133px">Interval</span><div style="left:7px;top:813px;width:939px;height:73.5px;background:#808080;border:1px solid #6d7177;border-top:none;border-radius:0 0 5px 5px;"></div><div style="left:8px;top:839.5px;width:937px;height:25px;background:#7a7f83;"></div><div style="left:8px;top:839px;width:937px;height:1px;background:#6d7177;"></div><div style="left:8px;top:864.2px;width:937px;height:1px;background:#6d7177;"></div><div style="left:120px;top:813px;width:1px;height:73px;background:#6d7177;"></div><div style="left:243.5px;top:813px;width:1px;height:73px;background:#6d7177;"></div><div style="left:385px;top:813px;width:1px;height:73px;background:#6d7177;"></div><div style="left:669.5px;top:813px;width:1px;height:73px;background:#6d7177;"></div><div style="left:811.5px;top:813px;width:1px;height:73px;background:#6d7177;"></div><span class="t" style="left:16px;top:819px;;letter-spacing:0.37px">90000</span><span class="t" style="left:129.3px;top:819px;;letter-spacing:-0.45px">1 Y</span><span class="t" style="left:16px;top:842.5px;;letter-spacing:-0.445px">D0120</span><span class="t" style="left:129.3px;top:842.5px;;letter-spacing:-0.45px">6 M + 1D</span><span class="t" style="left:16px;top:868px;;letter-spacing:-0.07px">D0140</span><span class="t" style="left:129.3px;top:868px;;letter-spacing:-0.45px">6 M + 1D</span><span class="t" style="left:252px;top:842.5px;">-</span><span class="t" style="left:252px;top:868px;">-</span><span class="t" style="left:394.5px;top:842.5px;;letter-spacing:0.138px">Periodic Oral Evaluation</span><span class="t" style="left:394.5px;top:868px;;letter-spacing:0.093px">Limited Oral Eval Prob Focused</span><span class="t" style="left:678px;top:842.5px;">-</span><span class="t" style="left:678px;top:868px;">-</span><span class="t" style="left:820px;top:842.5px;">-</span><span class="t" style="left:820px;top:868px;">-</span><div style="left:945.5px;top:800px;width:9px;height:86px;background:#6c6e71;border-radius:4px;"></div><div style="left:894px;top:118px;width:61px;height:12px;background:#003a6b;border-radius:5px;"></div><div style="left:966px;top:121px;width:124px;height:1.2px;background:repeating-linear-gradient(90deg,rgba(10,45,90,.55) 0 4px,rgba(10,45,90,0) 4px 7px);"></div><div style="left:1098.5px;top:120px;width:11.5px;height:2px;background:#0a3566;"></div><div style="left:1100px;top:118.3px;width:2px;height:2px;background:#0a3566;"></div><div style="left:1103.3px;top:118.3px;width:2px;height:2px;background:#0a3566;"></div><div style="left:1106.6px;top:118.3px;width:2px;height:2px;background:#0a3566;"></div><div style="left:966px;top:813px;width:468.5px;height:73.5px;background:#808080;border:1px solid #6d7177;border-top:none;"></div><div style="left:967px;top:838px;width:467px;height:24.5px;background:#7a7f83;"></div><div style="left:967px;top:837.5px;width:467px;height:1px;background:#6d7177;"></div><div style="left:967px;top:862.2px;width:467px;height:1px;background:#6d7177;"></div><div style="left:1152.5px;top:813px;width:1px;height:73px;background:#6d7177;"></div><div style="left:1293.5px;top:813px;width:1px;height:73px;background:#6d7177;"></div><span class="t" style="left:974.3px;top:841px;;letter-spacing:-0.185px">Last Ins Pay</span><span class="t" style="left:974.3px;top:865.5px;;letter-spacing:0.236px">Last Statement</span><span class="t" style="right:626.625px;top:841px;;letter-spacing:0.075px">$0.00</span><span class="t" style="left:1302px;top:841px;">-</span><span class="t" style="right:626.625px;top:865.5px;;letter-spacing:0.075px">$0.00</span><span class="t" style="left:1302px;top:865.5px;">-</span><div style="left:1445px;top:789px;width:470px;height:24px;background:#003a6b;border-radius:5px 0 0 0;"></div><span class="ht" style="left:1781px;top:793px;;letter-spacing:-0.11px">Ortho</span><div style="left:1444.5px;top:813px;width:470px;height:74.5px;background:#808080;border:1px solid #6d7177;border-top:none;"></div><div style="left:1445.5px;top:838.5px;width:468px;height:25px;background:#7a7f83;"></div><div style="left:1445.5px;top:838px;width:468px;height:1px;background:#6d7177;"></div><div style="left:1445.5px;top:863.2px;width:468px;height:1px;background:#6d7177;"></div><div style="left:1632.5px;top:813px;width:1px;height:74px;background:#6d7177;"></div><div style="left:1772.5px;top:813px;width:1px;height:74px;background:#6d7177;"></div><span class="t" style="left:1781.5px;top:817px;;letter-spacing:0.075px">$0.00</span><span class="t" style="left:1453.8px;top:841.5px;;letter-spacing:0.077px">Rem. Payments</span><span class="t" style="left:1641px;top:841.5px;;letter-spacing:-0.45px">12</span><span class="t" style="left:1781.5px;top:841.5px;">0</span><span class="t" style="left:1453.8px;top:866px;;letter-spacing:0.026px">Next Pay Date</span><span class="t" style="left:1641px;top:866px;;letter-spacing:-0.448px">05/31/2023</span><span class="t" style="left:1781.5px;top:866px;">-</span><div class="btn" style="left:1845px;top:118px;width:61px;height:23px"></div><svg style="position:absolute;left:1854px;top:123.5px" width="12" height="12" viewBox="0 0 12 12"><path d="M1 11l.7-3.2 6.6-6.6 2.5 2.5-6.6 6.6z M9.1.6l.9-.5 2 2-.6.9z" fill="#8d9aa8"/></svg><span class="ht" style="left:1872.6px;top:122px;font-size:11px;letter-spacing:-0.346px">EDIT</span><div style="left:1690px;top:146.5px;width:230px;height:24.5px;background:#7a7f83;"></div><div style="left:1690px;top:145.9px;width:230px;height:1px;background:#6d7177;"></div><div style="left:1690px;top:171.5px;width:230px;height:23.5px;background:#808080;"></div><div style="left:1690px;top:170.9px;width:230px;height:1px;background:#6d7177;"></div><div style="left:1690px;top:195.5px;width:230px;height:24.5px;background:#7a7f83;"></div><div style="left:1690px;top:194.9px;width:230px;height:1px;background:#6d7177;"></div><div style="left:1690px;top:220.5px;width:230px;height:38.5px;background:#808080;"></div><div style="left:1690px;top:219.9px;width:230px;height:1px;background:#6d7177;"></div><div style="left:1690px;top:283px;width:230px;height:24px;background:#808080;"></div><div style="left:1690px;top:282.4px;width:230px;height:1px;background:#6d7177;"></div><div style="left:1690px;top:307.5px;width:230px;height:23.5px;background:#7a7f83;"></div><div style="left:1690px;top:306.9px;width:230px;height:1px;background:#6d7177;"></div><div style="left:1690px;top:331.5px;width:230px;height:24.5px;background:#808080;"></div><div style="left:1690px;top:330.9px;width:230px;height:1px;background:#6d7177;"></div><div style="left:1690px;top:356.5px;width:230px;height:24.5px;background:#7a7f83;"></div><div style="left:1690px;top:355.9px;width:230px;height:1px;background:#6d7177;"></div><div style="left:1690px;top:381.5px;width:230px;height:23.5px;background:#808080;"></div><div style="left:1690px;top:380.9px;width:230px;height:1px;background:#6d7177;"></div><div style="left:1690px;top:405.5px;width:230px;height:25px;background:#7a7f83;"></div><div style="left:1690px;top:404.9px;width:230px;height:1px;background:#6d7177;"></div><div style="left:1690px;top:430.4px;width:230px;height:1px;background:#6d7177;"></div><div style="left:1690px;top:253.4px;width:230px;height:1px;background:#6d7177;"></div><div style="left:1690px;top:259px;width:230px;height:24px;background:#003a6b;"></div><span class="t" style="left:1690.8px;top:150.5px;;letter-spacing:0.32px">-8008</span><span class="t" style="left:1694.7px;top:199.5px;font-size:12.5px;color:#1b1d20;-webkit-text-stroke:.4px #1b1d20;letter-spacing:0.654px">Dentistry</span><span class="t" style="left:1690px;top:231.5px;font-weight:bold;font-size:12.5px;letter-spacing:-0.45px">RI / SEC</span><span class="ht" style="left:1692.7px;top:263px;;letter-spacing:-0.45px">Secondary</span><div class="btn" style="left:1765px;top:453px;width:141px;height:23px"></div><svg style="position:absolute;left:1775px;top:458px" width="10" height="10" viewBox="0 0 11 11"><path d="M5.5 0v11M0 5.500h11" stroke="#8d9aa8" stroke-width="2.600"/></svg><span class="ht" style="left:1791.7px;top:455.5px;font-size:11px;letter-spacing:0.05px">ADD NEW MEMBER</span><div style="left:1690px;top:481px;width:230px;height:23px;background:#003a6b;"></div><span class="ht" style="left:1694.7px;top:484.5px;;letter-spacing:-0.45px">Last Visit</span><span class="ht" style="left:1827px;top:484.5px;;letter-spacing:-0.398px">Active</span><div style="left:1690px;top:504px;width:230px;height:72.5px;background:#808080;border-bottom:1px solid #6d7177;"></div><div style="left:1690px;top:530.5px;width:214px;height:25px;background:#7a7f83;"></div><div style="left:1690px;top:530px;width:214px;height:1px;background:#6d7177;"></div><div style="left:1690px;top:555.2px;width:214px;height:1px;background:#6d7177;"></div><div style="left:1816.7px;top:504px;width:1px;height:72px;background:#6d7177;"></div><span class="t" style="left:1694px;top:510px;;letter-spacing:0.085px">05/04/2023</span><span class="t" style="left:1826.6px;top:510px;;letter-spacing:-0.45px">Yes</span><span class="t" style="left:1694px;top:534px;text-decoration:line-through;letter-spacing:-0.059px">05/20/2023</span><span class="t" style="left:1827px;top:534px;text-decoration:line-through;letter-spacing:0.312px">No</span><span class="t" style="left:1694px;top:558.5px;text-decoration:line-through;letter-spacing:-0.393px">05/15/2023</span><span class="t" style="left:1827px;top:558.5px;text-decoration:line-through;letter-spacing:0.312px">No</span><div style="left:1904px;top:505px;width:10px;height:71px;background:#5d6772;border-radius:4px;"></div><div class="btn" style="left:1829px;top:625px;width:77px;height:23px"></div><svg style="position:absolute;left:1838px;top:629.500px" width="11" height="13" viewBox="0 0 11 13"><path d="M.6.600h6.400l3.400 3.400v8.400H.6z M7 .6v3.400h3.400" fill="none" stroke="#8d9aa8" stroke-width="1.100"/><path d="M2.800 6.500h5.400M2.800 8.500h5.400M2.800 10.500h5.400" stroke="#8d9aa8" stroke-width="1"/></svg><span class="ht" style="left:1853.4px;top:628.5px;font-size:11px;letter-spacing:-0.45px">LEDGER</span><div style="left:1690px;top:652px;width:230px;height:24px;background:#003a6b;"></div><span class="ht" style="right:201.6px;top:655.5px;">nce</span><span class="ht" style="left:1762.9px;top:655.5px;;letter-spacing:-0.45px">Est Pat</span><span class="ht" style="left:1859.9px;top:655.5px;;letter-spacing:-0.45px">Est Ins</span><div style="left:1690px;top:676px;width:230px;height:75.5px;background:#808080;border-bottom:1px solid #6d7177;"></div><div style="left:1690px;top:701.5px;width:214px;height:25px;background:#7a7f83;"></div><div style="left:1690px;top:701px;width:214px;height:1px;background:#6d7177;"></div><div style="left:1690px;top:726.2px;width:214px;height:1px;background:#6d7177;"></div><div style="left:1718.7px;top:676px;width:1px;height:75px;background:#6d7177;"></div><div style="left:1812.7px;top:676px;width:1px;height:75px;background:#6d7177;"></div><span class="t" style="right:201px;top:680.5px;color:#233e5c;letter-spacing:.3px">4.00</span><span class="t" style="right:107.027px;top:680.5px;color:#233e5c;letter-spacing:-0.027px">$294.00</span><span class="t" style="right:13.075px;top:680.5px;color:#233e5c;letter-spacing:-0.075px">$0.00</span><span class="t" style="right:201px;top:705.5px;color:#233e5c;letter-spacing:.3px">4.00</span><span class="t" style="right:107.377px;top:705.5px;color:#233e5c;letter-spacing:-0.377px">$194.00</span><span class="t" style="right:13.075px;top:705.5px;color:#233e5c;letter-spacing:-0.075px">$0.00</span><span class="t" style="right:201px;top:730px;color:#233e5c;letter-spacing:.3px">0.00</span><span class="t" style="right:107.377px;top:730px;color:#233e5c;letter-spacing:-0.377px">$100.00</span><span class="t" style="right:13.075px;top:730px;color:#233e5c;letter-spacing:-0.075px">$0.00</span><div style="left:1904px;top:677px;width:10px;height:75px;background:#77797c;border-radius:4px;"></div><div style="left:1904px;top:677px;width:10px;height:57px;background:#5d6772;border-radius:4px;"></div><div class="btn" style="left:1680px;top:762.500px;width:106px;height:23px"></div><svg style="position:absolute;left:1691.5px;top:767px" width="12" height="12" viewBox="0 0 12 12"><path d="M1 11l.7-3.2 6.6-6.6 2.5 2.5-6.6 6.6z M9.1.6l.9-.5 2 2-.6.9z" fill="#8d9aa8"/></svg><span class="ht" style="left:1710.8px;top:765.5px;font-size:11px;letter-spacing:-0.297px">EDIT ORTHO</span><div class="btn" style="left:1791px;top:762.500px;width:115px;height:23px"></div><svg style="position:absolute;left:1799px;top:767px" width="12" height="12" viewBox="0 0 12 12"><path d="M1 11l.7-3.2 6.6-6.6 2.5 2.5-6.6 6.6z M9.1.6l.9-.5 2 2-.6.9z" fill="#8d9aa8"/></svg><span class="ht" style="left:1818.5px;top:765.5px;font-size:11px;letter-spacing:-0.378px">EDIT REGULAR</span></div>
<div id="foot"><div class="l"></div><span style="left:721px;letter-spacing:-.04px">© 2023 Planet DDS | <a style="color:#1d63d1;text-decoration:underline">Privacy Policy</a> |<span style="position:static;margin-left:6.800px">Page Time Left (hh:mm:ss) 1:57:3</span></span></div>
<div id="modal"><div id="mh"><span style="letter-spacing:0.101px">MEDICAL HISTORY</span><svg style="position:absolute;left:1430.500px;top:14.800px" width="11" height="12" viewBox="0 0 11 12"><path d="M1.600 1.600 L9.400 9.400 M9.400 1.600 L1.600 9.400" stroke="#f3eef2" stroke-width="3.600" transform="translate(0,1)"/><path d="M1.600 1.600 L9.400 9.400 M9.400 1.600 L1.600 9.400" stroke="#e6304f" stroke-width="3.600"/></svg></div><div id="mb"><span class="tab" style="left:24.500px;top:12px;color:#0b6cbf;-webkit-text-stroke:.45px #0b6cbf;letter-spacing:0.262px">MEDICAL ALERTS</span><span class="tab" style="left:168px;top:12px;letter-spacing:0.271px">DENTAL QUESTIONNAIRE</span><span class="tab" style="left:366.600px;top:12px;letter-spacing:0.286px">MEDICAL QUESTIONNAIRE</span><span class="tab" style="left:573.700px;top:12px;letter-spacing:0.013px">SIGNATURE</span><div style="left:15px;top:37px;width:1429px;height:1px;background:#d5dbe6"></div><div style="left:15px;top:36px;width:140px;height:2px;background:#0b6cbf"></div><div style="left:978px;top:6px;width:457px;height:26px;border:1px solid #d5dbe5;border-radius:3px;background:#fff"><span style="left:5px;top:3px;font-size:14.5px;line-height:18px;color:#1c1f23;white-space:nowrap;letter-spacing:0.226px">Medical History As Of 04/24/2023 04:12 PM PT</span><svg style="position:absolute;left:439px;top:10px" width="10" height="8" viewBox="0 0 10 8"><path d="M1.5 2 L5 5.5 L8.5 2" fill="none" stroke="#222" stroke-width="1.4"/></svg></div><span class="tab" style="left:15px;top:51px;color:#0b6cbf;font-weight:bold;font-size:14px;letter-spacing:-0.154px">ALLERGIC TO</span><span class="tab" style="left:1146px;top:51px;color:#555b63;letter-spacing:1.6px">NO</span><div style="left:1176.5px;top:52.5px;width:13px;height:13px;border-radius:7px;background:#000;color:#fff;font-size:10px;font-weight:bold;line-height:13.500px;text-align:center">N</div><span class="tab" style="left:1209px;top:51px;color:#555b63;letter-spacing:0.388px">NOT ANSWERED</span><div style="left:1335px;top:52.5px;width:13px;height:13px;border-radius:7px;background:#000"></div><span class="tab" style="left:1366px;top:51px;color:#555b63;letter-spacing:-0.45px">YES</span><div style="left:1397.5px;top:52.5px;width:13px;height:13px;border-radius:7px;background:#e0313f;color:#fff;font-size:10px;font-weight:bold;line-height:13.500px;text-align:center">Y</div><div style="left:15px;top:76px;width:1424px;height:122px;border:1px solid #dbe0ec;border-radius:4px;background:#fff;overflow:hidden"><div style="left:0;top:0px;width:1424px;height:30px;background:#f5f9fd;border-bottom:1px solid #dbe0ec"></div><span class="lab" style="left:10px;top:4px;letter-spacing:0.479px">Latex Rubber</span><div class="tg" style="left:423px;top:7px"><b>N</b><u>Y</u></div><span class="lab" style="left:484.5px;top:4px;letter-spacing:0.435px">Aspirin/Aspirina</span><div class="tg" style="left:897px;top:7px"><b>N</b><u>Y</u></div><span class="lab" style="left:959.5px;top:4px;letter-spacing:0.531px">Barbiturates/Sleeping Pills</span><div class="tg" style="left:1371.5px;top:7px"><b>N</b><u>Y</u></div><div style="left:0;top:30px;width:1424px;height:30px;background:#fff;border-bottom:1px solid #dbe0ec"></div><span class="lab" style="left:10px;top:34px;letter-spacing:0.563px">Codeine/Other narcotics</span><div class="tg" style="left:423px;top:37px"><b>N</b><u>Y</u></div><span class="lab" style="left:484.5px;top:34px;letter-spacing:0.731px">Iodine</span><div class="tg" style="left:897px;top:37px"><b>N</b><u>Y</u></div><span class="lab" style="left:959.5px;top:34px;letter-spacing:0.635px">Prior Hepatitis</span><div class="tg" style="left:1371.5px;top:37px"><b>N</b><u>Y</u></div><div style="left:0;top:60px;width:1424px;height:31px;background:#f5f9fd;border-bottom:1px solid #dbe0ec"></div><span class="lab" style="left:10px;top:64px;letter-spacing:0.588px">Penicillin/Penicilina</span><div class="tg" style="left:423px;top:67px"><b>N</b><u>Y</u></div><span class="lab" style="left:484.5px;top:64px;letter-spacing:0.67px">No Epinephrine</span><div class="tg" style="left:897px;top:67px"><b>N</b><u>Y</u></div><span class="lab" style="left:959.5px;top:64px;letter-spacing:0.651px">Bee sting</span><div class="tg" style="left:1371.5px;top:67px"><b>N</b><u>Y</u></div><div style="left:0;top:91px;width:1424px;height:30px;background:#fff;border-bottom:1px solid #dbe0ec"></div><span class="lab" style="left:10px;top:95px;letter-spacing:0.409px">Sulfa Drugs</span><div class="tg" style="left:423px;top:98px"><b>N</b><u>Y</u></div><span class="lab" style="left:484.5px;top:95px;letter-spacing:0.718px">Amoxicillin</span><div class="tg" style="left:897px;top:98px"><b>N</b><u>Y</u></div><span class="lab" style="left:959.5px;top:95px;letter-spacing:0.879px">Erythromycin</span><div class="tg" style="left:1371.5px;top:98px"><b>N</b><u>Y</u></div><div style="left:473px;top:0;width:1px;height:121px;background:#dbe0ec"></div><div style="left:948px;top:0;width:1px;height:121px;background:#dbe0ec"></div></div><span class="tab" style="left:15px;top:207px;color:#0b6cbf;font-weight:bold;font-size:14px;letter-spacing:0px">CHECK, IF APPLICABLE</span><div style="left:15px;top:237px;width:1424px;height:393px;border:1px solid #dbe0ec;border-radius:4px;background:#fff;overflow:hidden"><div style="left:0;top:0px;width:1424px;height:30px;background:#f5f9fd;border-bottom:1px solid #dbe0ec"></div><span class="lab" style="left:10px;top:4px;letter-spacing:0.281px">Acid Reflux/GERD</span><div class="tg" style="left:423px;top:7px"><b>N</b><u>Y</u></div><span class="lab" style="left:484.5px;top:4px;letter-spacing:0.458px">AIDS/HIV infection</span><div class="tg" style="left:897px;top:7px"><b>N</b><u>Y</u></div><span class="lab" style="left:959.5px;top:4px;letter-spacing:0.612px">Alcohol/Drug Abuse</span><div class="tg" style="left:1371.5px;top:7px"><b>N</b><u>Y</u></div><div style="left:0;top:30px;width:1424px;height:30px;background:#fff;border-bottom:1px solid #dbe0ec"></div><span class="lab" style="left:10px;top:34px;letter-spacing:0.643px">Anemia/Leukemia</span><div class="tg" style="left:423px;top:37px"><b>N</b><u>Y</u></div><span class="lab" style="left:484.5px;top:34px;letter-spacing:0.571px">Anorexia/Bulimia</span><div class="tg" style="left:897px;top:37px"><b>N</b><u>Y</u></div><span class="lab" style="left:959.5px;top:34px;letter-spacing:0.813px">Arthritis</span><div class="tg" style="left:1371.5px;top:37px"><b>N</b><u>Y</u></div><div style="left:0;top:60px;width:1424px;height:30px;background:#f5f9fd;border-bottom:1px solid #dbe0ec"></div><span class="lab" style="left:10px;top:64px;letter-spacing:0.797px">Blood clotting problems</span><div class="tg" style="left:423px;top:67px"><b>N</b><u>Y</u></div><span class="lab" style="left:484.5px;top:64px;letter-spacing:0.411px">Asthma/Hay Fever</span><div class="tg" style="left:897px;top:67px"><b>N</b><u>Y</u></div><span class="lab" style="left:959.5px;top:64px;letter-spacing:0.854px">Bronchitis</span><div class="tg" style="left:1371.5px;top:67px"><b>N</b><u>Y</u></div><div style="left:0;top:90px;width:1424px;height:30px;background:#fff;border-bottom:1px solid #dbe0ec"></div><span class="lab" style="left:10px;top:94px;letter-spacing:0.596px">Cancer/ tumor or Growth</span><div class="tg" style="left:423px;top:97px"><b>N</b><u>Y</u></div><span class="lab" style="left:484.5px;top:94px;letter-spacing:0.381px">Cardiac Pacemaker</span><div class="tg" style="left:897px;top:97px"><b>N</b><u>Y</u></div><span class="lab" style="left:959.5px;top:94px;letter-spacing:0.346px">Contact Lenses</span><div class="tg" style="left:1371.5px;top:97px"><b>N</b><u>Y</u></div><div style="left:0;top:120px;width:1424px;height:30px;background:#f5f9fd;border-bottom:1px solid #dbe0ec"></div><span class="lab" style="left:10px;top:124px;letter-spacing:0.55px">Local Anesthetics</span><div class="tg" style="left:423px;top:127px"><b>N</b><u>Y</u></div><span class="lab" style="left:484.5px;top:124px;letter-spacing:0.484px">Chest Pain upon Exertion</span><div class="tg" style="left:897px;top:127px"><b>N</b><u>Y</u></div><span class="lab" style="left:959.5px;top:124px;letter-spacing:0.414px">Color Blindness</span><div class="tg" style="left:1371.5px;top:127px"><b>N</b><u>Y</u></div><div style="left:0;top:150px;width:1424px;height:31px;background:#fff;border-bottom:1px solid #dbe0ec"></div><span class="lab" style="left:10px;top:154px;letter-spacing:0.577px">Damaged Heart Valve</span><div class="tg" style="left:423px;top:157px"><b>N</b><u>Y</u></div><span class="lab" style="left:484.5px;top:154px;letter-spacing:0.617px">Diabetes</span><div class="tg" style="left:897px;top:157px"><b>N</b><u>Y</u></div><span class="lab" style="left:959.5px;top:154px;letter-spacing:0.722px">Emphysema</span><div class="tg" style="left:1371.5px;top:157px"><b>N</b><u>Y</u></div><div style="left:0;top:181px;width:1424px;height:30px;background:#f5f9fd;border-bottom:1px solid #dbe0ec"></div><span class="lab" style="left:10px;top:185px;letter-spacing:0.651px">Environmental Allergies</span><div class="tg" style="left:423px;top:188px"><b>N</b><u>Y</u></div><span class="lab" style="left:484.5px;top:185px;letter-spacing:0.363px">Epilepsy</span><div class="tg" style="left:897px;top:188px"><b>N</b><u>Y</u></div><span class="lab" style="left:959.5px;top:185px;letter-spacing:0.383px">Fainting Spells/Seizures</span><div class="tg" style="left:1371.5px;top:188px"><b>N</b><u>Y</u></div><div style="left:0;top:211px;width:1424px;height:30px;background:#fff;border-bottom:1px solid #dbe0ec"></div><span class="lab" style="left:10px;top:215px;letter-spacing:0.332px">Fever Blisters / Herpes</span><div class="tg" style="left:423px;top:218px"><b>N</b><u>Y</u></div><span class="lab" style="left:484.5px;top:215px;letter-spacing:0.819px">Frequently dry mouth</span><div class="tg" style="left:897px;top:218px"><b>N</b><u>Y</u></div><span class="lab" style="left:959.5px;top:215px;letter-spacing:0.578px">Frequent Headaches</span><div class="tg" style="left:1371.5px;top:218px"><b>N</b><u>Y</u></div><div style="left:0;top:241px;width:1424px;height:30px;background:#f5f9fd;border-bottom:1px solid #dbe0ec"></div><span class="lab" style="left:10px;top:245px;letter-spacing:0.417px">Gall Bladder Trouble</span><div class="tg" style="left:423px;top:248px"><b>N</b><u>Y</u></div><span class="lab" style="left:484.5px;top:245px;letter-spacing:0.422px">Heart disease/Angina</span><div class="tg" style="left:897px;top:248px"><b>N</b><u>Y</u></div><span class="lab" style="left:959.5px;top:245px;letter-spacing:0.625px">Heart Attack/Stroke</span><div class="tg" style="left:1371.5px;top:248px"><b>N</b><u>Y</u></div><div style="left:0;top:271px;width:1424px;height:30px;background:#fff;border-bottom:1px solid #dbe0ec"></div><span class="lab" style="left:10px;top:275px;letter-spacing:1.027px">Heart murmur</span><div class="tg" style="left:423px;top:278px"><b>N</b><u>Y</u></div><span class="lab" style="left:484.5px;top:275px;letter-spacing:0.681px">Hepatitis/Jaundice</span><div class="tg" style="left:897px;top:278px"><b>N</b><u>Y</u></div><span class="lab" style="left:959.5px;top:275px;letter-spacing:0.477px">High Blood Pressure</span><div class="tg" style="left:1371.5px;top:278px"><b>N</b><u>Y</u></div><div style="left:0;top:301px;width:1424px;height:30px;background:#f5f9fd;border-bottom:1px solid #dbe0ec"></div><span class="lab" style="left:10px;top:305px;letter-spacing:0.228px">Hives/Skin Rash</span><div class="tg" style="left:423px;top:308px"><b>N</b><u>Y</u></div><span class="lab" style="left:484.5px;top:305px;letter-spacing:0.646px">Joint Replacement</span><div class="tg" style="left:897px;top:308px"><b>N</b><u>Y</u></div><span class="lab" style="left:959.5px;top:305px;letter-spacing:0.693px">Kidney/Bladder trouble</span><div class="tg" style="left:1371.5px;top:308px"><b>N</b><u>Y</u></div><div style="left:0;top:331px;width:1424px;height:31px;background:#fff;border-bottom:1px solid #dbe0ec"></div><span class="lab" style="left:10px;top:335px;letter-spacing:0.424px">Kidney Dialysis</span><div class="tg" style="left:423px;top:338px"><b>N</b><u>Y</u></div><span class="lab" style="left:484.5px;top:335px;letter-spacing:0.177px">Liver Disease</span><div class="tg" style="left:897px;top:338px"><b>N</b><u>Y</u></div><span class="lab" style="left:959.5px;top:335px;letter-spacing:0.424px">Low Blood Pressure</span><div class="tg" style="left:1371.5px;top:338px"><b>N</b><u>Y</u></div><div style="left:0;top:362px;width:1424px;height:30px;background:#f5f9fd;border-bottom:1px solid #dbe0ec"></div><span class="lab" style="left:10px;top:366px;letter-spacing:0.744px">Mental health problems</span><div class="tg" style="left:423px;top:369px"><b>N</b><u>Y</u></div><span class="lab" style="left:484.5px;top:366px;letter-spacing:0.402px">Mitral Valve Prolapse</span><div class="tg" style="left:897px;top:369px"><b>N</b><u>Y</u></div><span class="lab" style="left:959.5px;top:366px;letter-spacing:0.42px">Persistent Diarrhea</span><div class="tg" style="left:1371.5px;top:369px"><b>N</b><u>Y</u></div><div style="left:473px;top:0;width:1px;height:392px;background:#dbe0ec"></div><div style="left:948px;top:0;width:1px;height:392px;background:#dbe0ec"></div></div><div style="left:1438px;top:46px;width:6px;height:568px;background:#cfcfcf;border-radius:3px"></div><div style="left:1435px;top:46px;width:9px;height:355px;background:#b3cbe2;border-radius:4px"></div></div><div id="mf"><svg style="position:absolute;left:22px;top:13.5px" width="18" height="18" viewBox="0 0 18 18"><circle cx="9" cy="9" r="9" fill="#0a6cc4"/><path d="M7.6 3.2h2.8v2.6H7.6z M6.6 7.3h3.9v5.5h1.2v1.8H6.6v-1.8h1.2V9.1H6.6z" fill="#fff"/></svg><div style="left:1238px;top:7px;width:120px;height:31px;background:#cc0000"></div><div style="left:1244px;top:13px;width:108px;height:19px;background:#0072c6"></div><span style="left:1271.500px;top:12px;font-size:15px;font-weight:bold;color:#fff;line-height:17px;white-space:nowrap;letter-spacing:.35px">ADD NEW</span><svg style="position:absolute;left:1252.500px;top:14.500px" width="12" height="12" viewBox="0 0 12 12"><path d="M6 .5v11M.5 6h11" stroke="#fff" stroke-width="3.1"/></svg><div style="left:1359.5px;top:11px;width:86px;height:24px;background:#2c3e5d;border-radius:5px"></div><span style="left:1388px;top:13px;font-size:15px;font-weight:bold;color:#fff;line-height:17px;white-space:nowrap;letter-spacing:-.65px">CLOSE</span><svg style="position:absolute;left:1368px;top:16.500px" width="11" height="11" viewBox="0 0 11 11"><path d="M2 2l7 7M9 2l-7 7" stroke="#fff" stroke-width="3.2" stroke-linecap="butt"/></svg></div><div style="position:absolute;left:0;top:49px;width:1460px;height:661px;border:1px solid #f2f4f8;border-top:none;border-radius:0 0 5px 5px"></div></div>
</body>
</html>
